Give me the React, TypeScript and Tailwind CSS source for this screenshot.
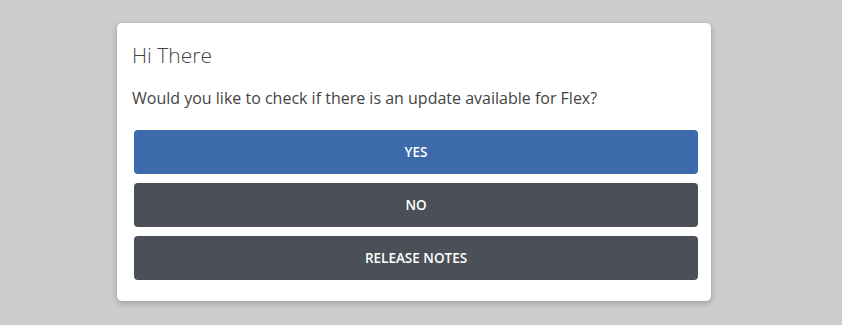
export default function App() {
  const font = { fontFamily: '"Open Sans", "Noto Sans", sans-serif' };
  return (
    <div className="min-h-[325px] w-full bg-[#cdcdcd] pt-[23px]" style={font}>
      <div className="ml-[117px] w-[594px] rounded-[5px] bg-white pb-[21px] pl-[17px] pr-[13px] pt-[18px] shadow-[0_2px_6px_rgba(0,0,0,0.25)]">
        <h1 className="-ml-[2px] text-[21px] font-light leading-[28px] text-[#444]">Hi There</h1>
        <p className="-ml-[2px] mt-[17px] text-[16px] leading-[24px] text-[#444]">
          Would you like to check if there is an update available for Flex?
        </p>
        <div className="mt-[20px] flex flex-col gap-[9px]">
          <button className="h-[44px] w-full rounded-[4px] bg-[#3d6aaa] text-[13.5px] font-semibold text-white">
            YES
          </button>
          <button className="h-[44px] w-full rounded-[4px] bg-[#4b5058] text-[13.5px] font-semibold text-white">
            NO
          </button>
          <button className="h-[44px] w-full rounded-[4px] bg-[#4b5058] text-[13.5px] font-semibold text-white">
            RELEASE NOTES
          </button>
        </div>
      </div>
    </div>
  );
}
